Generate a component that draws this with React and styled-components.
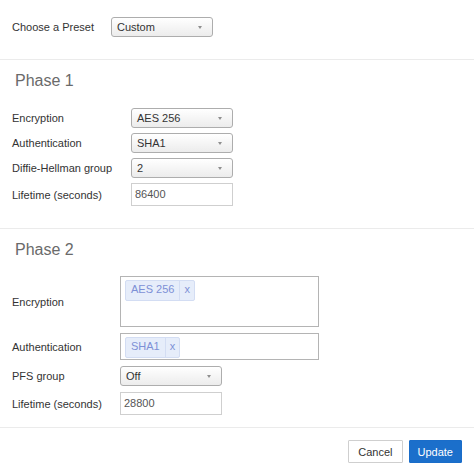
import styled, { createGlobalStyle } from "styled-components";

const GlobalStyle = createGlobalStyle`
    body {
        margin: 0;
        background: #fff;
        font-family: "Liberation Sans", Arial, sans-serif;
        color: #333;
    }
`;

const Page = styled.div`
    width: 474px;
`;

const PresetRow = styled.div`
    display: flex;
    align-items: center;
    padding: 17px 12px 22px;
`;

const Label = styled.div`
    font-size: 11px;
    color: #333;
`;

const PresetLabel = styled(Label)`
    width: 99px;
`;

const Divider = styled.div`
    border-top: 1px solid #ebebeb;
`;

const Section = styled.div`
    padding: 11px 12px ${(p) => p.$bottom}px;
`;

const Heading = styled.div`
    font-size: 16px;
    line-height: 20px;
    color: #6a6a6a;
    padding-left: 3px;
    margin-bottom: ${(p) => p.$gap}px;
`;

const Form = styled.div`
    display: grid;
    grid-template-columns: ${(p) => p.$labelWidth}px auto;
    row-gap: ${(p) => p.$gap}px;
    align-items: center;
    justify-items: start;
`;

const SelectBox = styled.div`
    position: relative;
    box-sizing: border-box;
    width: ${(p) => p.$width}px;
    height: 20px;
    border: 1px solid #adadad;
    border-radius: 3px;
    background: linear-gradient(#ffffff, #ececec);
    font-size: 11px;
    line-height: 18px;
    color: #333;
    padding-left: 5px;
`;

const Arrow = styled.span`
    position: absolute;
    right: 10px;
    top: 8px;
    width: 0;
    height: 0;
    border-left: 2.5px solid transparent;
    border-right: 2.5px solid transparent;
    border-top: 3px solid #8f8f8f;
`;

const TextInput = styled.div`
    box-sizing: border-box;
    width: ${(p) => p.$width}px;
    height: 23px;
    border: 1px solid #cfcfcf;
    font-size: 11px;
    line-height: 21px;
    color: #555;
    padding-left: 3px;
`;

const MultiBox = styled.div`
    box-sizing: border-box;
    width: 199px;
    height: ${(p) => p.$height}px;
    border: 1px solid #b4b4b4;
    padding: 3px 4px;
    display: flex;
    align-items: flex-start;
`;

const Chip = styled.div`
    display: flex;
    height: 19px;
    border: 1px solid #d3ddf3;
    border-radius: 2px;
    background: #e6edfa;
    color: #7d90d6;
    font-size: 11px;
    line-height: 17px;
`;

const ChipText = styled.span`
    padding: 0 5px;
    border-right: 1px solid #d3ddf3;
`;

const ChipClose = styled.span`
    padding: 0 4px;
`;

const Footer = styled.div`
    display: flex;
    justify-content: flex-end;
    gap: 6px;
    padding: 12px 12px;
`;

const Button = styled.button`
    height: 23px;
    padding: 0 ${(p) => (p.$primary ? 8 : 9)}px;
    border: 1px solid ${(p) => (p.$primary ? "#1a6dc9" : "#cfcfcf")};
    background: ${(p) => (p.$primary ? "#1b6fcb" : "#fff")};
    color: ${(p) => (p.$primary ? "#fff" : "#333")};
    font-family: "Liberation Sans", Arial, sans-serif;
    font-size: 11px;
    border-radius: 1px;
`;

const Select = ({ value, width }) => (
    <SelectBox $width={width}>
        {value}
        <Arrow />
    </SelectBox>
);

const Tag = ({ text }) => (
    <Chip>
        <ChipText>{text}</ChipText>
        <ChipClose>x</ChipClose>
    </Chip>
);

const App = () => {
    return (
        <Page>
            <GlobalStyle />
            <PresetRow>
                <PresetLabel>Choose a Preset</PresetLabel>
                <Select value="Custom" width={102} />
            </PresetRow>
            <Divider />

            <Section $bottom={22}>
                <Heading $gap={17}>Phase 1</Heading>
                <Form $labelWidth={119} $gap={5}>
                    <Label>Encryption</Label>
                    <Select value="AES 256" width={102} />
                    <Label>Authentication</Label>
                    <Select value="SHA1" width={102} />
                    <Label>Diffie-Hellman group</Label>
                    <Select value="2" width={102} />
                    <Label>Lifetime (seconds)</Label>
                    <TextInput $width={102}>86400</TextInput>
                </Form>
            </Section>
            <Divider />

            <Section $bottom={12}>
                <Heading $gap={16}>Phase 2</Heading>
                <Form $labelWidth={108} $gap={6}>
                    <Label>Encryption</Label>
                    <MultiBox $height={51}>
                        <Tag text="AES 256" />
                    </MultiBox>
                    <Label>Authentication</Label>
                    <MultiBox $height={27}>
                        <Tag text="SHA1" />
                    </MultiBox>
                    <Label>PFS group</Label>
                    <Select value="Off" width={102} />
                    <Label>Lifetime (seconds)</Label>
                    <TextInput $width={102}>28800</TextInput>
                </Form>
            </Section>
            <Divider />

            <Footer>
                <Button>Cancel</Button>
                <Button $primary>Update</Button>
            </Footer>
        </Page>
    );
};

export default App;
